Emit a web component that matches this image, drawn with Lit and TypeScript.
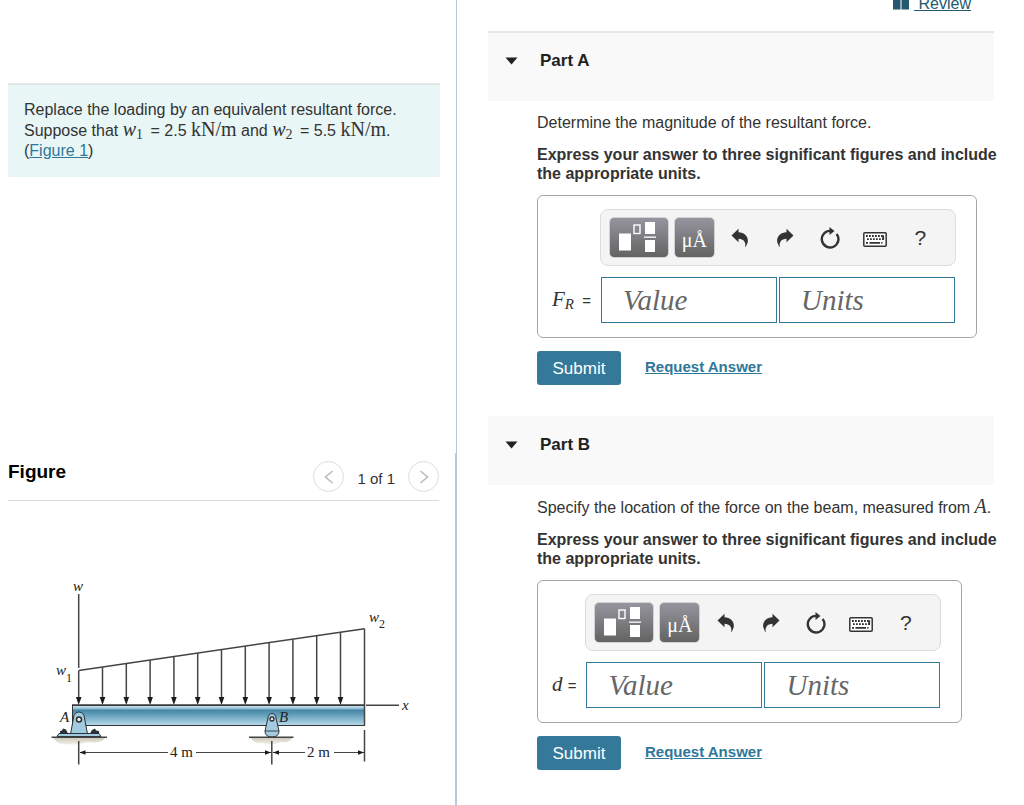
import { LitElement, html, svg, css } from "lit";
import { customElement, property } from "lit/decorators.js";

const ARROWS = Array.from({ length: 12 }, (_, i) => i);

@customElement("beam-figure")
class BeamFigure extends LitElement {
  static styles = css`
    :host { display: block; }
    svg { display: block; width: 100%; max-width: 400px; height: auto; }
    .line { stroke: #444; stroke-width: 1.5; fill: none; }
    .thin { stroke: #444; stroke-width: 1; fill: none; }
    .head { fill: #1c1c1c; }
    .steel { fill: #a3cbe0; stroke: #26333b; stroke-width: 1; }
    .bolt { fill: #2a3138; }
    .ground { fill: url(#ground); }
    text { font-family: "Liberation Serif", serif; fill: #222; font-size: 15px; }
    .it { font-style: italic; }
    .sub { font-size: 12px; font-style: normal; }
  `;

  render() {
    return html`
      <svg viewBox="40 570 400 210" role="img" aria-label="Beam with distributed load">
        <defs>
          <linearGradient id="beam" x1="0" y1="0" x2="0" y2="1">
            <stop offset="0" stop-color="#c8e2ee" />
            <stop offset="0.12" stop-color="#a6cfe1" />
            <stop offset="0.24" stop-color="#4787a6" />
            <stop offset="0.4" stop-color="#5a97b4" />
            <stop offset="1" stop-color="#b9dbea" />
          </linearGradient>
          <linearGradient id="ground" x1="0" y1="0" x2="0" y2="1">
            <stop offset="0" stop-color="#c9c4b4" />
            <stop offset="1" stop-color="#f4f2ec" />
          </linearGradient>
        </defs>

        <line class="line" x1="78.7" y1="594" x2="78.7" y2="668" />
        <line class="line" x1="78.7" y1="670.5" x2="364.5" y2="628.7" />
        ${ARROWS.map((k) => {
          const x = 78.7 + 23.8 * k;
          const y = 670.5 - 3.48 * k;
          return svg`
            <line class="line" x1=${x} y1=${y} x2=${x} y2="700" />
            <path class="head" d="M${x - 2.8} 697 L${x + 2.8} 697 L${x} 705 Z" />`;
        })}
        <rect x="72.5" y="705.5" width="292" height="20" fill="url(#beam)" stroke="#333" stroke-width="1" />
        <line x1="72" y1="705.2" x2="365" y2="705.2" stroke="#3a3a3a" stroke-width="1.8" />
        <line class="line" x1="364.5" y1="628.7" x2="364.5" y2="725.5" />
        <line class="line" x1="366" y1="705.3" x2="399" y2="705.3" />

        <path class="ground" d="M53 737 H106 Q100 745 88 742 Q76 746 66 744 Q58 746 53 737 Z" />
        <path class="steel" d="M70.5 734 L73.5 718 A5.5 6 0 0 1 84.5 718 L87.5 734 Z" />
        <path class="steel" d="M57 736.5 L59 733.5 H99 L101 736.5 Z" />
        <path class="bolt" d="M60 733.5 V731 L62 730.5 L63 728.5 L66 729.5 L68 733.5 Z M90 733.5 L92 730 L95 728.5 L96 730.5 L99 731 V733.5 Z" />
        <circle cx="79" cy="719.5" r="2.5" fill="#e8eef1" stroke="#2f2f2f" stroke-width="1.5" />
        <line class="line" x1="51.5" y1="737.3" x2="107" y2="737.3" />

        <path class="ground" d="M250 737 H293 Q289 744 281 742 Q271 746 262 743 Q255 745 250 737 Z" />
        <path class="steel" d="M265 731 L268 718 A4 4.5 0 0 1 276 718 L279 731 Q279 737 272 737 Q265 737 265 731 Z" />
        <line class="thin" x1="265" y1="731" x2="279" y2="731" />
        <circle cx="272" cy="719" r="2" fill="#e8eef1" stroke="#2f2f2f" stroke-width="1.3" />
        <line class="line" x1="249" y1="737.3" x2="293.5" y2="737.3" />

        <line class="line" x1="78.7" y1="741" x2="78.7" y2="764.5" />
        <line class="line" x1="271.8" y1="741" x2="271.8" y2="764.5" />
        <line class="line" x1="364.5" y1="730" x2="364.5" y2="761.5" />
        <path class="thin" d="M80 752.5 H168 M196 752.5 H271 M273 752.5 H305 M334 752.5 H364" />
        <path class="head" d="M79.5 752.5 l6 -2.2 v4.4 Z M271 752.5 l-6 -2.2 v4.4 Z M273 752.5 l6 -2.2 v4.4 Z M364 752.5 l-6 -2.2 v4.4 Z" />

        <text class="it" x="73" y="591">w</text>
        <text class="it" x="56" y="675">w<tspan class="sub" dy="7">1</tspan></text>
        <text class="it" x="369" y="622">w<tspan class="sub" dy="6">2</tspan></text>
        <text class="it" x="402" y="710">x</text>
        <text class="it" x="60" y="722">A</text>
        <text class="it" x="279" y="722">B</text>
        <text x="170" y="757">4 m</text>
        <text x="307" y="757">2 m</text>
      </svg>
    `;
  }
}

@customElement("answer-box")
class AnswerBox extends LitElement {
  @property() symbol = "";
  @property() sub = "";

  static styles = css`
    :host { display: block; }
    .box {
      box-sizing: border-box; width: fit-content; max-width: 100%;
      display: grid; grid-template-columns: auto auto; column-gap: 9px; row-gap: 11px;
      align-items: center; padding: 13px 20px 14px 14px;
      border: 1px solid #a6a6a6; border-radius: 6px;
    }
    .tools {
      grid-column: 2; box-sizing: border-box; height: 57px; width: 356px;
      display: flex; align-items: center; padding: 0 8px;
      background: #f4f4f4; border: 1px solid #dcdcdc; border-radius: 8px;
    }
    button { border: 0; padding: 0; background: none; color: #333; display: grid; place-items: center; }
    .dark {
      height: 41px; border-radius: 5px; color: #fff; border: 1px solid #d2d2d4;
      background: linear-gradient(#96959e, #636363);
      font: 20px/24px "Liberation Serif", serif;
    }
    .tpl { width: 60px; margin-right: 5px; }
    .unit { width: 41px; margin-right: 3px; padding-top: 4px; }
    .icon { width: 45px; height: 40px; }
    .help { font: 21px/40px "Liberation Sans", Arial, sans-serif; }
    svg { display: block; }
    label { font: 15px/20px "Liberation Sans", Arial, sans-serif; color: #333; white-space: nowrap; }
    .math { font: italic 21px/20px "Liberation Serif", serif; padding-right: 1px; }
    .math sub { font-size: 15px; line-height: 0; vertical-align: -3px; padding-right: 3px; }
    .fields { display: grid; grid-template-columns: 176px 176px; column-gap: 2px; padding-left: 1px; }
    input {
      box-sizing: border-box; width: 100%; min-width: 0; height: 46px; margin: 0; padding: 0 21px;
      border: 1px solid #35799a; border-radius: 0; background: #fff; color: #333;
      font: italic 29px/44px "Liberation Serif", serif;
    }
    input::placeholder { color: #666; opacity: 1; }
  `;

  render() {
    return html`
      <div class="box">
        <div class="tools" role="toolbar">
          <button class="dark tpl" aria-label="Templates">
            <svg width="40" height="32" viewBox="0 0 40 32">
              <rect x="0" y="11.5" width="12" height="17" fill="#fff" />
              <rect x="15" y="3" width="6" height="8.5" fill="none" stroke="#fff" stroke-width="1.4" />
              <rect x="26" y="0" width="10" height="12" fill="#fff" />
              <rect x="25" y="14.5" width="12" height="1.3" fill="#fff" />
              <rect x="26" y="18" width="10" height="12" fill="#fff" />
            </svg>
          </button>
          <button class="dark unit" aria-label="Unit symbols">μÅ</button>
          <button class="icon" aria-label="Undo">
            <svg width="18" height="20" viewBox="0 0 18 20">
              <path fill="#333" d="M0.5 7.5 L7.5 0.8 V4.3 C13 4.5 17.5 8 16.8 14 L14.8 19 L14.3 18.8 C15 14 12.5 11 7.5 10.8 V14.2 Z" />
            </svg>
          </button>
          <button class="icon" aria-label="Redo">
            <svg width="18" height="20" viewBox="0 0 18 20">
              <path fill="#333" d="M17.5 7.5 L10.5 0.8 V4.3 C5 4.5 0.5 8 1.2 14 L3.2 19 L3.7 18.8 C3 14 5.5 11 10.5 10.8 V14.2 Z" />
            </svg>
          </button>
          <button class="icon" aria-label="Reset">
            <svg width="20" height="22" viewBox="0 0 20 22">
              <path fill="none" stroke="#333" stroke-width="2.4" d="M10.5 3.9 A8.3 8.3 0 1 0 16.6 7" />
              <path fill="#333" d="M9.5 0 L14.5 4 L9.5 8 Z" />
            </svg>
          </button>
          <button class="icon" aria-label="Keyboard">
            <svg width="24" height="20" viewBox="0 0 24 20">
              <rect x="0.8" y="4.8" width="22.4" height="13.4" rx="1" fill="#fff" stroke="#333" stroke-width="1.5" />
              <path stroke="#333" stroke-width="1.8" stroke-dasharray="1.8 1.2" d="M3 8 H21 M4 11.2 H21" />
              <path stroke="#333" stroke-width="1.8" d="M3 14.8 H5 M6.5 14.8 H17 M18.2 14.8 H19.5 M20.2 7.2 V12" />
            </svg>
          </button>
          <button class="icon help" aria-label="Help">?</button>
        </div>
        <label for="value"><span class="math">${this.symbol}${this.sub ? html`<sub>${this.sub}</sub>` : ""}</span> =</label>
        <div class="fields">
          <input id="value" placeholder="Value" />
          <input aria-label="Units" placeholder="Units" />
        </div>
      </div>
    `;
  }
}

@customElement("app-root")
class AppRoot extends LitElement {
  static styles = css`
    :host { display: block; font: 16px/19px "Liberation Sans", Arial, sans-serif; color: #333; background: #fff; }
    a { color: #2f7899; text-decoration: underline; }
    p, h2, h3 { margin: 0; }
    .page { display: grid; grid-template-columns: 457fr 567fr; min-height: 100vh; }
    .left { display: flex; flex-direction: column; min-width: 0; }
    .problem { box-sizing: border-box; min-height: 453px; padding: 83px 16px 0 8px; border-right: 1px solid #b8c9df; }
    .card { padding: 15px 16px 16px; background: #e8f6f6; border-top: 2px solid #dfe6e6; line-height: 20px; }
    .m { font: 20px/18px "Liberation Serif", serif; }
    .v { font-style: italic; }
    .m sub { font-size: 14px; line-height: 0; vertical-align: -3px; font-style: normal; padding-right: 3px; }
    .figure { flex: 1; padding: 8px 16px 0 8px; border-right: 2px solid #b8c9df; }
    .bar { display: flex; align-items: center; gap: 13px; padding-bottom: 8px; border-bottom: 1px solid #dcdcdc; font-size: 15px; }
    .bar span { padding-top: 3px; }
    .bar h2 { flex: 1; font-size: 19px; line-height: 22px; color: #000; padding-bottom: 9px; }
    .nav { width: 31px; height: 31px; padding: 0; border: 1px solid #dedede; border-radius: 50%; background: #fff; display: grid; place-items: center; }
    .draw { padding: 69px 0 0 32px; margin-right: -16px; }
    .right { min-width: 0; padding: 0 30px 35px 31px; }
    .top { display: flex; justify-content: flex-end; align-items: flex-end; gap: 5px; height: 31px; margin-top: -18px; padding-right: 23px; box-sizing: border-box; }
    .top a { line-height: 18px; white-space: pre; color: #24596f; }
    .head { display: flex; gap: 22px; box-sizing: border-box; height: 69px; padding: 19px 0 0 17px; background: #f9f9f9; }
    .first { margin-top: 18px; height: 70px; padding-top: 18px; border-top: 2px solid #e6e6e6; }
    .head h3 { font-size: 17px; line-height: 20px; color: #222; }
    .toggle { border: 0; padding: 0; width: 13px; height: 20px; background: none; display: grid; place-items: center; }
    .body { margin-right: -20px; padding: 12px 0 31px 49px; }
    .hint { font-weight: bold; margin: 13px 0 12px; }
    .acts { display: flex; align-items: center; gap: 24px; margin-top: 13px; }
    .submit { width: 84px; height: 34px; padding: 1px 0 0; border: 0; border-radius: 3px; background: #35799a; color: #fff; font: 17px/33px "Liberation Sans", Arial, sans-serif; }
    .acts a { font-size: 15px; font-weight: bold; padding-bottom: 4px; }
    svg { display: block; }
  `;

  part(name: string, first: boolean, text: unknown, symbol: string, sub: string) {
    return html`
      <section>
        <header class="head ${first ? "first" : ""}">
          <button class="toggle" aria-label="Collapse ${name}">
            <svg width="13" height="8" viewBox="0 0 13 8"><path fill="#222" d="M0.5 0.5 H12.5 L6.5 7.5 Z" /></svg>
          </button>
          <h3>${name}</h3>
        </header>
        <div class="body">
          <p>${text}</p>
          <p class="hint">Express your answer to three significant figures and include<br />the appropriate units.</p>
          <answer-box .symbol=${symbol} .sub=${sub}></answer-box>
          <div class="acts">
            <button class="submit">Submit</button>
            <a href="#">Request Answer</a>
          </div>
        </div>
      </section>
    `;
  }

  render() {
    return html`
      <main class="page">
        <div class="left">
          <div class="problem">
            <p class="card">
              Replace the loading by an equivalent resultant force. Suppose that
              <span class="m"><span class="v">w</span><sub>1</sub></span> = 2.5 <span class="m">kN/m</span> and
              <span class="m"><span class="v">w</span><sub>2</sub></span> = 5.5 <span class="m">kN/m</span>.
              <br />(<a href="#">Figure 1</a>)
            </p>
          </div>
          <div class="figure">
            <div class="bar">
              <h2>Figure</h2>
              <button class="nav" aria-label="Previous">
                <svg width="10" height="14" viewBox="0 0 10 14"><path fill="none" stroke="#bbb" stroke-width="1.6" d="M8.5 1 L1.5 7 L8.5 13" /></svg>
              </button>
              <span>1 of 1</span>
              <button class="nav" aria-label="Next">
                <svg width="10" height="14" viewBox="0 0 10 14"><path fill="none" stroke="#bbb" stroke-width="1.6" d="M1.5 1 L8.5 7 L1.5 13" /></svg>
              </button>
            </div>
            <div class="draw"><beam-figure></beam-figure></div>
          </div>
        </div>
        <div class="right">
          <div class="top">
            <svg width="16" height="16" viewBox="0 0 16 16"><path fill="#24596f" d="M0 0 H7.5 V12.5 H0 Z M8.5 0 H16 V12.5 H8.5 Z" /></svg>
            <a href="#"> Review</a>
          </div>
          ${this.part("Part A", true, "Determine the magnitude of the resultant force.", "F", "R")}
          ${this.part("Part B", false, html`Specify the location of the force on the beam, measured from <span class="m v">A</span>.`, "d", "")}
        </div>
      </main>
    `;
  }
}
